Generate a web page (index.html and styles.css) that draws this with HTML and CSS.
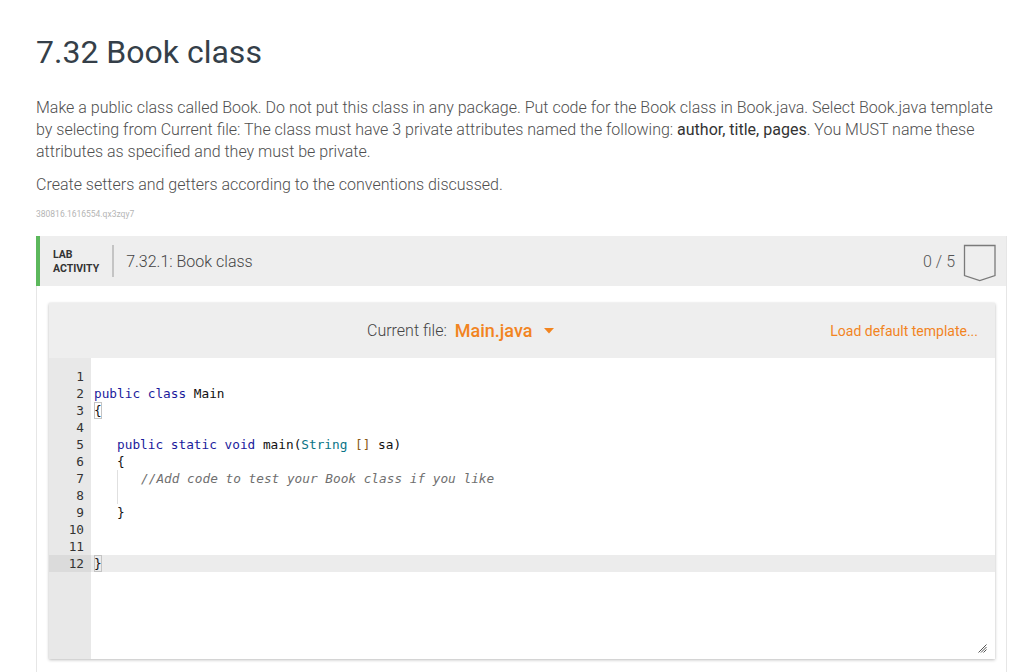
FILE: index.html
```html
<!DOCTYPE html>
<html lang="en">
<head>
<meta charset="utf-8">
<title>7.32 Book class</title>
<link rel="stylesheet" href="styles.css">
</head>
<body>
<main class="page">
  <h1 class="title">7.32 Book class</h1>
  <p class="para">Make a public class called Book. Do not put this class in any package. Put code for the Book class in Book.java. Select Book.java template by selecting from Current file: The class must have 3 private attributes named the following: <strong>author, title, pages</strong>. You MUST name these attributes as specified and they must be private.</p>
  <p class="para">Create setters and getters according to the conventions discussed.</p>
  <div class="ident">380816.1616554.qx3zqy7</div>

  <section class="lab">
    <header class="lab-head">
      <div class="lab-label">LAB<br>ACTIVITY</div>
      <div class="lab-sep"></div>
      <div class="lab-title">7.32.1: Book class</div>
      <div class="lab-score">0 / 5</div>
      <svg class="badge" width="34" height="38" viewBox="0 0 34 38">
        <path d="M1.5 1.5 H32 V31.5 L16.75 36.5 L1.5 31.5 Z" fill="none" stroke="#7a7a7a" stroke-width="1.3"/>
      </svg>
    </header>
    <div class="lab-body">
      <div class="editor">
        <div class="editor-head">
          <div class="file-select">
            <span class="file-label">Current file:</span>
            <span class="file-name">Main.java</span>
            <svg class="caret" width="10" height="6" viewBox="0 0 10 6"><path d="M0 0 H10 L5 5.5 Z" fill="#f2841f"/></svg>
          </div>
          <a class="load-link">Load default template...</a>
        </div>
        <div class="code">
          <div class="gutter">
            <div class="ln">1</div>
            <div class="ln">2</div>
            <div class="ln">3</div>
            <div class="ln">4</div>
            <div class="ln">5</div>
            <div class="ln">6</div>
            <div class="ln">7</div>
            <div class="ln">8</div>
            <div class="ln">9</div>
            <div class="ln">10</div>
            <div class="ln">11</div>
            <div class="ln active">12</div>
          </div>
          <div class="lines">
            <div class="line"> </div>
            <div class="line"><span class="kw">public</span> <span class="kw">class</span> Main</div>
            <div class="line"><span class="brk">{</span></div>
            <div class="line"> </div>
            <div class="line">   <span class="kw">public</span> <span class="kw">static</span> <span class="kw">void</span> main(<span class="ty">String</span> <span class="sq">[]</span> sa)</div>
            <div class="line">   {</div>
            <div class="line"><span class="guide">   </span>   <span class="cm">//Add code to test your Book class if you like</span></div>
            <div class="line"><span class="guide">   </span></div>
            <div class="line">   }</div>
            <div class="line"> </div>
            <div class="line"> </div>
            <div class="line active"><span class="brk">}</span></div>
          </div>
          <svg class="grip" width="9" height="9" viewBox="0 0 9 9">
            <path d="M8.5 0.5 L0.5 8.5 M8.5 3 L3 8.5 M8.5 5.5 L5.5 8.5" stroke="#555" stroke-width="1" fill="none"/>
          </svg>
        </div>
      </div>
    </div>
  </section>
</main>
</body>
</html>
```

FILE: styles.css
```css
* { box-sizing: border-box; }

html, body {
  margin: 0;
  padding: 0;
  background: #fff;
}

body {
  font-family: Roboto, "Noto Sans", Arial, sans-serif;
  color: #555;
}

.page {
  padding: 32px 2px 0 36px;
}

.title {
  margin: 0;
  font-size: 32px;
  font-weight: 400;
  line-height: 40px;
  color: #353f49;
}

.para {
  margin: 25px 0 0;
  font-size: 16px;
  font-weight: 300;
  line-height: 22px;
  color: #4f4f4f;
  padding-right: 8px;
}

.para + .para {
  margin-top: 11px;
}

.para strong {
  font-weight: 400;
  color: #333;
}

.ident {
  margin-top: 12px;
  font-size: 8.5px;
  line-height: 12px;
  color: #b5b5b5;
}

.lab {
  margin-top: 16px;
  border-right: 1px solid #e6e6e6;
  border-left: 1px solid #e6e6e6;
}

.lab-head {
  display: flex;
  align-items: center;
  height: 50px;
  background: #eeeeee;
  border-left: 4px solid #5cb85c;
  margin-left: -1px;
  padding: 0 9px 0 13px;
}

.lab-label {
  font-size: 10.5px;
  font-weight: 700;
  line-height: 14px;
  color: #333;
  padding-top: 1px;
}

.lab-sep {
  width: 2px;
  height: 32px;
  background: #c4c4c4;
  margin: 0 12px 0 13px;
}

.lab-title {
  flex: 1;
  font-size: 16px;
  font-weight: 300;
  color: #444;
}

.lab-score {
  font-size: 16px;
  font-weight: 300;
  color: #555;
  margin-right: 8px;
}

.badge {
  display: block;
  margin-top: 4px;
}

.lab-body {
  padding: 17px 11px 20px 12px;
}

.editor {
  background: #fff;
  box-shadow: 0 1px 3px rgba(0,0,0,0.25), 0 0 1px rgba(0,0,0,0.08);
}

.editor-head {
  display: flex;
  align-items: center;
  height: 55px;
  background: #eeeeee;
  padding: 0 17px 0 0;
}

.file-select {
  flex: 1;
  display: flex;
  align-items: center;
  padding-left: 318px;
}

.file-label {
  font-size: 16px;
  font-weight: 300;
  color: #444;
}

.file-name {
  font-size: 18px;
  font-weight: 500;
  color: #f2841f;
  margin-left: 8px;
}

.caret {
  display: block;
  margin-left: 12px;
  margin-top: 1px;
}

.load-link {
  font-size: 14px;
  font-weight: 400;
  color: #f2841f;
  cursor: pointer;
}

.code {
  position: relative;
  display: flex;
  height: 301px;
  padding-top: 10px;
  background: linear-gradient(to right, #e8e8e8 42px, #fff 42px);
  font-family: "DejaVu Sans Mono", "Liberation Mono", monospace;
  font-size: 12.75px;
}

.gutter {
  width: 42px;
  flex: none;
}

.ln {
  height: 17px;
  line-height: 17px;
  text-align: right;
  padding-right: 7px;
  color: #333;
}

.ln.active {
  background: #dbdbdb;
}

.lines {
  flex: 1;
}

.line {
  height: 17px;
  line-height: 17px;
  white-space: pre;
  padding-left: 3px;
  color: #111;
}

.line.active {
  background: #ececec;
}

.kw { color: #1b1b9c; }
.ty { color: #0a7487; }
.sq { color: #8a5a1a; }
.cm { color: #6f6f6f; font-style: italic; }

.brk {
  display: inline-block;
  height: 17px;
  outline: 1px solid #c4c4c4;
  outline-offset: -1px;
}

.guide {
  display: inline-block;
  height: 17px;
  border-left: 1px solid #e0e0e0;
  vertical-align: top;
  margin-left: 23px;
  margin-right: -23px;
}

.grip {
  position: absolute;
  right: 8px;
  bottom: 6px;
}
```
